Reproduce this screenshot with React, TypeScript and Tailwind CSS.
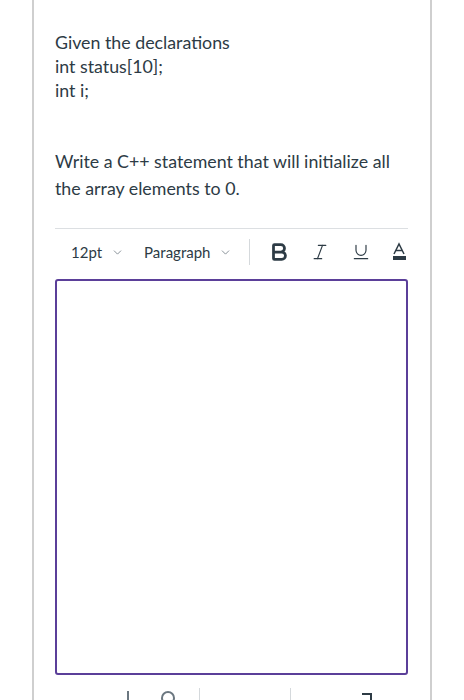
import { Bold, Italic, Underline, ChevronDown } from "lucide-react";

function ToolbarSelect({ label }: { label: string }) {
  return (
    <div className="flex items-center gap-[9px] text-[15px] text-[#2d3b45]">
      <span>{label}</span>
      <ChevronDown className="h-[13px] w-[13px] text-[#6f7a82]" strokeWidth={1.5} />
    </div>
  );
}

function TextColorIcon() {
  return (
    <svg width="14" height="22" viewBox="0 0 14 22" className="text-[#2d3b45]">
      <path d="M2 13 L7 3 L12 13" fill="none" stroke="currentColor" strokeWidth="1.5" />
      <path d="M4 9.5 H10" stroke="currentColor" strokeWidth="1.5" />
      <rect x="1" y="15" width="13" height="4" fill="currentColor" />
    </svg>
  );
}

export default function App() {
  return (
    <div
      className="h-[700px] w-[464px] overflow-hidden bg-white"
      style={{ fontFamily: "Lato, 'Open Sans', sans-serif" }}
    >
      <div className="ml-[32px] h-full w-[400px] border-x-2 border-[#cfcfcf] pl-[21px]">
        <div className="w-[353px]">
          <p className="pt-[30px] text-[17.8px] leading-[24px] text-[#2d3b45]">
            Given the declarations
            <br />
            int status[10];
            <br />
            int i;
          </p>
          <p className="mt-[46px] text-[17.8px] leading-[27px] text-[#2d3b45]">
            Write a C++ statement that will initialize all the array elements to 0.
          </p>

          <div className="mt-[26px] border-t border-[#dcdfe2]">
            <div className="flex h-[46px] items-center overflow-hidden pl-[16px]">
              <ToolbarSelect label="12pt" />
              <div className="ml-[20px]">
                <ToolbarSelect label="Paragraph" />
              </div>
              <div className="ml-[17px] h-[26px] w-px bg-[#d5d9dc]" />
              <Bold className="ml-[18px] h-[22px] w-[22px] shrink-0 text-[#2d3b45]" strokeWidth={3} />
              <Italic className="ml-[20px] h-[20px] w-[20px] shrink-0 text-[#2d3b45]" strokeWidth={1.4} />
              <Underline className="ml-[21px] h-[20px] w-[20px] shrink-0 text-[#2d3b45]" strokeWidth={1.4} />
              <div className="ml-[21px] shrink-0">
                <TextColorIcon />
              </div>
            </div>
            <div className="mt-[4px] h-[396px] rounded-[3px] border-2 border-[#5b3f99]" />
          </div>

          <div className="relative mt-[13px] h-[20px]">
            <div className="absolute left-[72px] top-[3px] h-[10px] w-[2px] bg-[#6b7780]" />
            <div className="absolute left-[106px] top-[3px] h-[14px] w-[14px] rounded-full border-2 border-[#6b7780]" />
            <div className="absolute left-[144px] top-0 h-[20px] w-px bg-[#d5d9dc]" />
            <div className="absolute left-[235px] top-0 h-[20px] w-px bg-[#d5d9dc]" />
            <div className="absolute left-[307px] top-[5px] h-[2px] w-[10px] bg-[#2d3b45]" />
            <div className="absolute left-[315px] top-[5px] h-[10px] w-[2px] bg-[#2d3b45]" />
          </div>
        </div>
      </div>
    </div>
  );
}
